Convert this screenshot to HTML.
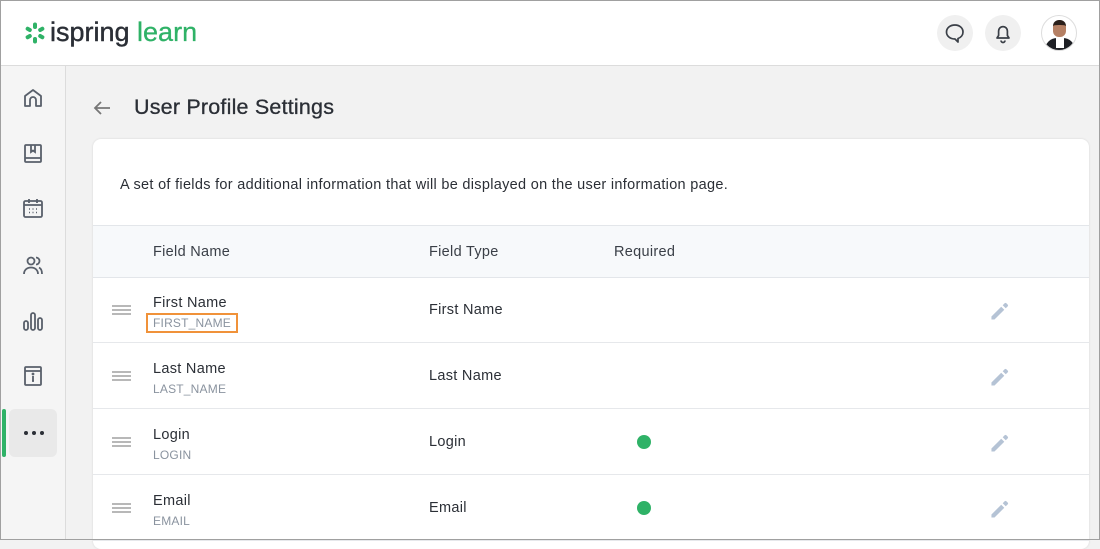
<!DOCTYPE html>
<html><head><meta charset="utf-8"><style>
*{box-sizing:border-box;margin:0;padding:0}
body{width:1100px;height:540px;overflow:hidden;font-family:"Liberation Sans",Arial,sans-serif;background:#f2f2f2;position:relative;color:#2b2f36}
.frame{position:absolute;inset:0;border:1px solid #a0a0a0;pointer-events:none;z-index:10}
.top{position:absolute;left:0;top:0;width:1100px;height:66px;background:#fff;border-bottom:1px solid #dcdcdc}
.side{position:absolute;left:0;top:66px;width:66px;height:474px;background:#f5f5f5;border-right:1px solid #dcdcdc}
.ic{position:absolute;left:22px;width:22px;height:22px}
.circ{position:absolute;top:15px;width:36px;height:36px;border-radius:50%;background:#f0f0f0}
.card{position:absolute;left:93px;top:139px;width:996px;height:410px;background:#fff;border-radius:8px;box-shadow:0 0 2px rgba(0,0,0,.12);letter-spacing:0.3px}
.hdr{position:absolute;left:0;top:86px;width:996px;height:53px;background:#f7f9fb;border-top:1px solid #e3e6ea;border-bottom:1px solid #e3e6ea}
.t{position:absolute;font-size:14.5px;white-space:nowrap}
.row{position:absolute;left:0;width:996px;height:66px;border-bottom:1px solid #e6e8eb}
.drag{position:absolute;left:19px;top:28px;width:19px;height:10px;border-top:2px solid #b8b8b8;border-bottom:2px solid #b8b8b8}
.drag:after{content:"";position:absolute;left:0;top:2px;width:19px;height:2px;background:#b8b8b8}
.nm{position:absolute;left:60px;top:18px;font-size:14.5px;color:#2b2f36}
.code{position:absolute;left:60px;top:39px;font-size:12px;color:#8a939f;letter-spacing:0.2px}
.ft{position:absolute;left:336px;top:25px;font-size:14.5px}
.dot{position:absolute;left:544px;top:26px;width:14px;height:14px;border-radius:50%;background:#2fb267}
.pen{position:absolute;left:896px;top:23px}
</style></head><body>
<div class="top">
 <svg style="position:absolute;left:24px;top:22px" width="22" height="22" viewBox="0 0 22 22"><g fill="#2fb267">
 <rect x="9" y="0.5" width="4" height="6.5" rx="2"/><rect x="9" y="15" width="4" height="6.5" rx="2"/>
 <rect x="9" y="0.5" width="4" height="6.5" rx="2" transform="rotate(60 11 11)"/><rect x="9" y="0.5" width="4" height="6.5" rx="2" transform="rotate(120 11 11)"/>
 <rect x="9" y="0.5" width="4" height="6.5" rx="2" transform="rotate(-60 11 11)"/><rect x="9" y="0.5" width="4" height="6.5" rx="2" transform="rotate(-120 11 11)"/></g></svg>
 <div style="position:absolute;left:50px;top:17px;font-size:27px;color:#2b2f36;letter-spacing:0;-webkit-text-stroke:0.4px #2b2f36">ispring <span style="color:#2fb267;-webkit-text-stroke:0.3px #2fb267">learn</span></div>
 <div class="circ" style="left:937px"><svg width="36" height="36" viewBox="0 0 36 36"><path d="M18 10c-5 0-8.5 3-8.5 7s3.5 7 8.5 7l3 3v-3.5c3-1 5-3.5 5-6.5 0-4-3.5-7-8-7z" fill="none" stroke="#3a3f47" stroke-width="1.7" stroke-linejoin="round"/></svg></div>
 <div class="circ" style="left:985px"><svg width="36" height="36" viewBox="0 0 36 36"><path d="M12 23h12l-1.6-2.5V16a4.4 4.4 0 0 0-8.8 0v4.5z M16 25.5a2 2 0 0 0 4 0" fill="none" stroke="#3a3f47" stroke-width="1.7" stroke-linejoin="round"/></svg></div>
 <div style="position:absolute;left:1041px;top:15px;width:36px;height:36px;border-radius:50%;background:#fff;border:1px solid #ddd;overflow:hidden">
  <div style="position:absolute;left:11px;top:4px;width:13px;height:17px;border-radius:6px;background:#b58064;border-top:5px solid #2a1f1a"></div>
  <div style="position:absolute;left:3px;top:22px;width:30px;height:16px;border-radius:12px 12px 0 0;background:#1d1f24"></div>
  <div style="position:absolute;left:14px;top:22px;width:8px;height:10px;background:#fff"></div></div>
</div>
<div class="side">
 <svg class="ic" style="top:21px" viewBox="0 0 22 22" fill="none" stroke="#59606b" stroke-width="1.8" stroke-linejoin="round"><path d="M3 19V9l8-6 8 6v10h-5v-6a3 3 0 0 0-6 0v6z"/></svg>
 <svg class="ic" style="top:76px" viewBox="0 0 22 22" fill="none" stroke="#59606b" stroke-width="1.8"><rect x="3" y="3" width="16" height="17" rx="1"/><path d="M3 16h16M9 3v7l2-1.5 2 1.5V3"/></svg>
 <svg class="ic" style="top:131px" viewBox="0 0 22 22" fill="none" stroke="#59606b" stroke-width="1.8"><rect x="2" y="4" width="18" height="16" rx="1.5"/><path d="M2 8h18M7 2v4M15 2v4"/><path d="M7 12h1M10.5 12h1M14 12h1M7 15.5h1M10.5 15.5h1M14 15.5h1" stroke-width="1.6"/></svg>
 <svg class="ic" style="top:188px" viewBox="0 0 22 22" fill="none" stroke="#59606b" stroke-width="1.8"><circle cx="9" cy="7" r="3.5"/><path d="M2 20c0-4 3-6.5 7-6.5s7 2.5 7 6.5M14 3.5a3.5 3.5 0 0 1 0 7M17 13.5c2 1 3 3 3 6.5"/></svg>
 <svg class="ic" style="top:244px" viewBox="0 0 22 22" fill="none" stroke="#59606b" stroke-width="1.8"><rect x="2" y="11" width="4" height="9" rx="2"/><rect x="9" y="3" width="4" height="17" rx="2"/><rect x="16" y="8" width="4" height="12" rx="2"/></svg>
 <svg class="ic" style="top:299px" viewBox="0 0 22 22" fill="none" stroke="#59606b" stroke-width="1.8"><rect x="3" y="2" width="16" height="18" rx="1"/><path d="M3 6h16M11 11v5M10 16h2" /><circle cx="11" cy="9" r=".5" fill="#59606b"/></svg>
 <div style="position:absolute;left:2px;top:343px;width:4px;height:48px;background:#2fb267;border-radius:2px"></div>
 <div style="position:absolute;left:9px;top:343px;width:48px;height:48px;background:#e9e9e9;border-radius:6px"></div>
 <div style="position:absolute;left:24px;top:365px;width:20px;height:4px">
  <span style="position:absolute;left:0;width:4px;height:4px;border-radius:50%;background:#2b2f36"></span>
  <span style="position:absolute;left:8px;width:4px;height:4px;border-radius:50%;background:#2b2f36"></span>
  <span style="position:absolute;left:16px;width:4px;height:4px;border-radius:50%;background:#2b2f36"></span></div>
</div>
<svg style="position:absolute;left:93px;top:99px" width="18" height="18" viewBox="0 0 18 18" fill="none" stroke="#777" stroke-width="1.8"><path d="M17 9H2M8 3L2 9l6 6"/></svg>
<div class="t" style="left:134px;top:95px;font-size:21.5px;color:#2b2f36;-webkit-text-stroke:0.3px #2b2f36;letter-spacing:0.2px">User Profile Settings</div>
<div class="card">
 <div class="t" style="left:27px;top:38px;color:#2b2f36">A set of fields for additional information that will be displayed on the user information page.</div>
 <div class="hdr">
  <div class="t" style="left:60px;top:18px;color:#3a3f47">Field Name</div>
  <div class="t" style="left:336px;top:18px;color:#3a3f47">Field Type</div>
  <div class="t" style="left:521px;top:18px;color:#3a3f47">Required</div>
 </div>
 <div class="row" style="top:138px"><div class="drag"></div><div class="nm">First Name</div><div class="code" style="left:53px;top:36px;border:2px solid #f0923a;padding:1px 5px">FIRST_NAME</div><div class="ft">First Name</div>
  <svg class="pen" width="22" height="22" viewBox="0 0 18 18"><path d="M2 13.5V16h2.5l8-8L10 5.5zM11.2 4.3l2.5 2.5 1.6-1.6a1 1 0 0 0 0-1.4L14.2 2.7a1 1 0 0 0-1.4 0z" fill="#b5c3d5"/></svg></div>
 <div class="row" style="top:204px"><div class="drag"></div><div class="nm">Last Name</div><div class="code">LAST_NAME</div><div class="ft">Last Name</div>
  <svg class="pen" width="22" height="22" viewBox="0 0 18 18"><path d="M2 13.5V16h2.5l8-8L10 5.5zM11.2 4.3l2.5 2.5 1.6-1.6a1 1 0 0 0 0-1.4L14.2 2.7a1 1 0 0 0-1.4 0z" fill="#b5c3d5"/></svg></div>
 <div class="row" style="top:270px"><div class="drag"></div><div class="nm">Login</div><div class="code">LOGIN</div><div class="ft">Login</div><div class="dot"></div>
  <svg class="pen" width="22" height="22" viewBox="0 0 18 18"><path d="M2 13.5V16h2.5l8-8L10 5.5zM11.2 4.3l2.5 2.5 1.6-1.6a1 1 0 0 0 0-1.4L14.2 2.7a1 1 0 0 0-1.4 0z" fill="#b5c3d5"/></svg></div>
 <div class="row" style="top:336px"><div class="drag"></div><div class="nm">Email</div><div class="code">EMAIL</div><div class="ft">Email</div><div class="dot"></div>
  <svg class="pen" width="22" height="22" viewBox="0 0 18 18"><path d="M2 13.5V16h2.5l8-8L10 5.5zM11.2 4.3l2.5 2.5 1.6-1.6a1 1 0 0 0 0-1.4L14.2 2.7a1 1 0 0 0-1.4 0z" fill="#b5c3d5"/></svg></div>
</div>
<div class="frame"></div>
</body></html>
